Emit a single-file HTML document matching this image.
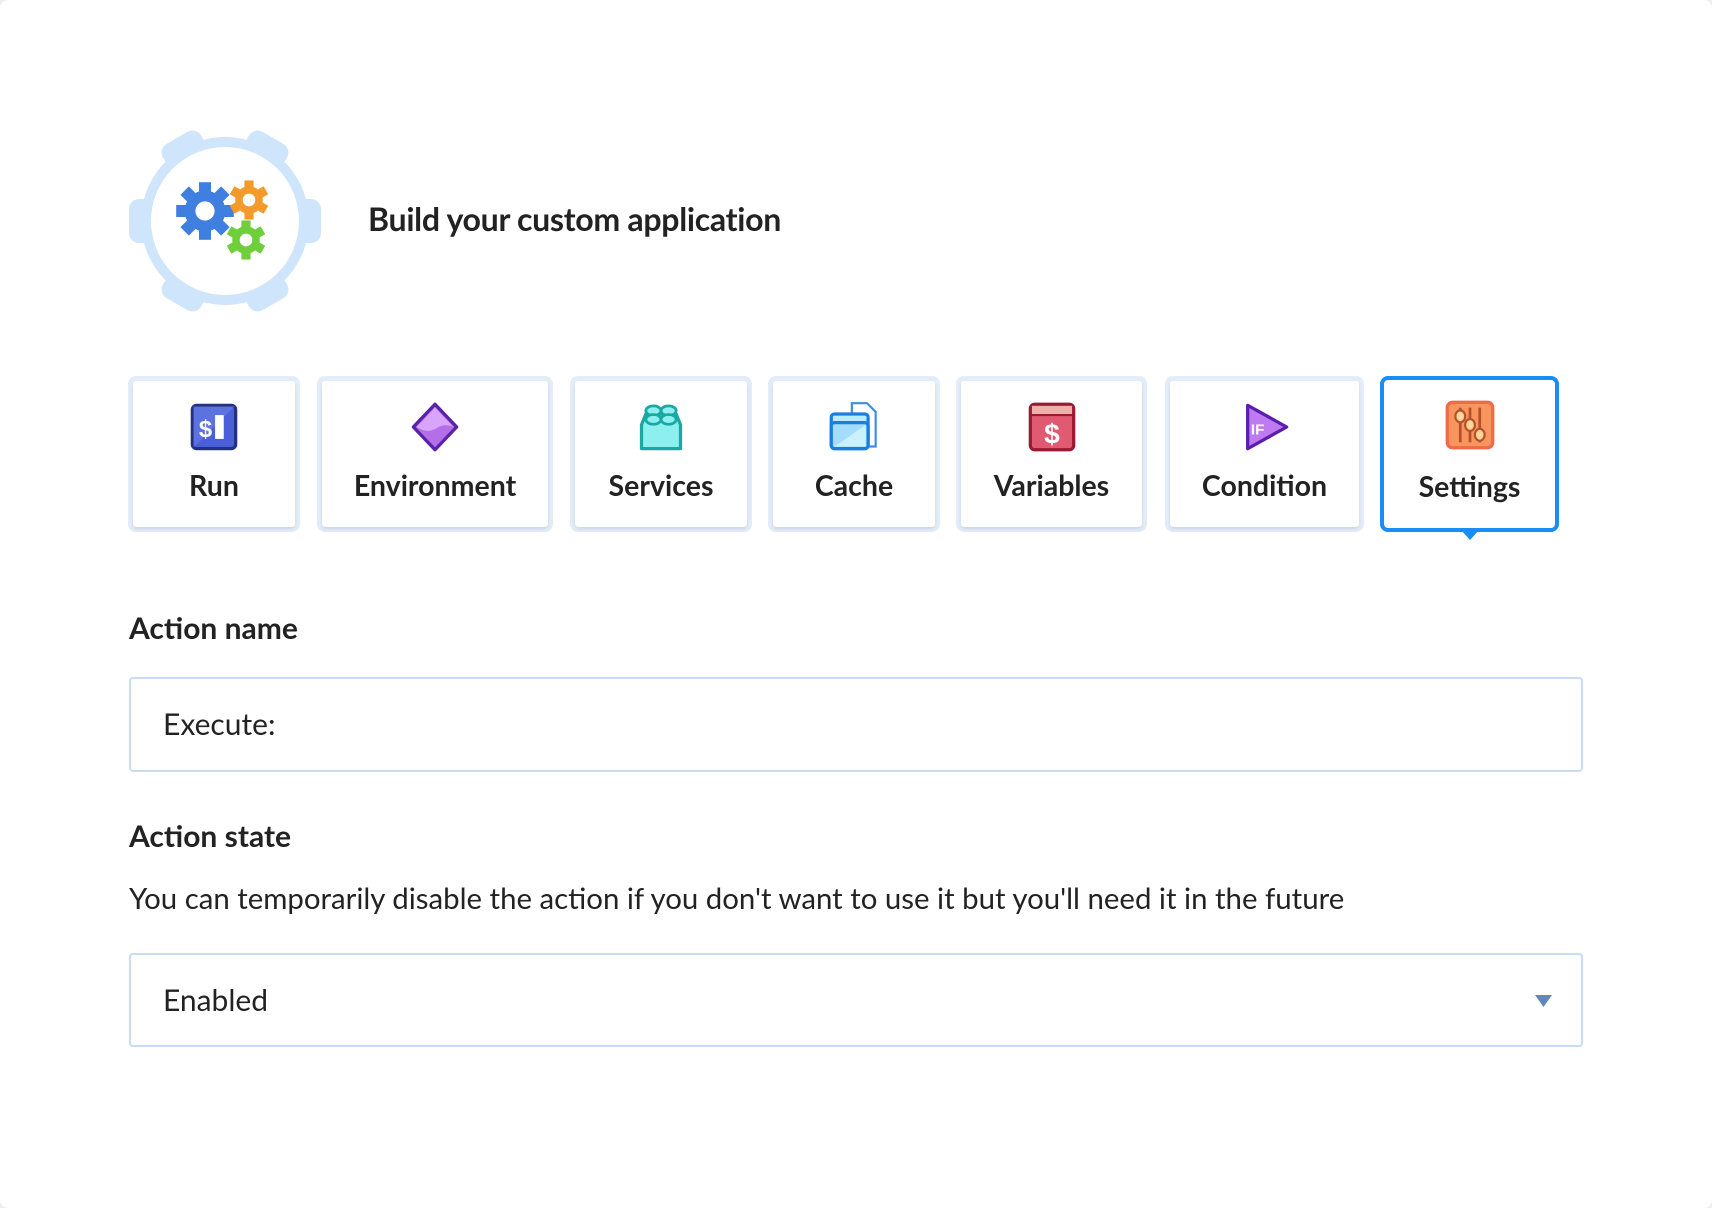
<!DOCTYPE html>
<html><head><meta charset="utf-8"><style>
html,body{margin:0;padding:0;background:#eeeeee;}
#c{position:relative;width:1712px;height:1208px;background:#fff;border-radius:8px;overflow:hidden;font-family:"Lato","Liberation Sans",sans-serif;color:#222;}
.a{position:absolute;}
.tab{position:absolute;top:376px;height:156px;box-sizing:border-box;border:5px solid #e3edf9;border-radius:8px;background:#fff;}
.tab .in{position:absolute;inset:0;border-radius:4px;box-shadow:0 2px 3px rgba(150,170,200,.35);}
.tab .ic{position:absolute;left:50%;top:20px;width:52px;height:52px;margin-left:-26px;}
.tab .lb{position:absolute;left:0;right:0;top:88px;text-align:center;font-weight:bold;font-size:28.5px;color:#222;}
.sel{border:4px solid #1a8cf5;border-radius:8px;}
.lab{font-weight:bold;font-size:30px;}
.inp{position:absolute;left:129px;width:1454px;box-sizing:border-box;border:2px solid #c7dcf5;border-radius:4px;font-size:30px;}
</style></head><body><div id="c">
<svg class="a" style="left:125px;top:125px" width="200" height="192" viewBox="-100 -96 200 192">
<g fill="#cfe5fb" transform="rotate(30)">
<circle r="84"/>
<g id="t"><rect x="-22" y="-96" width="44" height="30" rx="10"/></g>
<use href="#t" transform="rotate(60)"/><use href="#t" transform="rotate(120)"/><use href="#t" transform="rotate(180)"/><use href="#t" transform="rotate(240)"/><use href="#t" transform="rotate(300)"/>
</g>
<circle r="74" fill="#fff"/>
<g transform="translate(-20,-10) scale(1.2)" fill="#3f7fe0"><circle r="17"/><g id="g1"><rect x="-5" y="-24" width="10" height="12"/></g><use href="#g1" transform="rotate(45)"/><use href="#g1" transform="rotate(90)"/><use href="#g1" transform="rotate(135)"/><use href="#g1" transform="rotate(180)"/><use href="#g1" transform="rotate(225)"/><use href="#g1" transform="rotate(270)"/><use href="#g1" transform="rotate(315)"/><circle r="8" fill="#fff"/></g>
<g transform="translate(24,-21) scale(1.15)" fill="#f39a2a"><circle r="12"/><g id="g2"><rect x="-4" y="-17" width="8" height="9"/></g><use href="#g2" transform="rotate(60)"/><use href="#g2" transform="rotate(120)"/><use href="#g2" transform="rotate(180)"/><use href="#g2" transform="rotate(240)"/><use href="#g2" transform="rotate(300)"/><circle r="5.5" fill="#fff"/></g>
<g transform="translate(21,19) scale(1.15)" fill="#6fcf3a"><circle r="12"/><g id="g3"><rect x="-4" y="-17" width="8" height="9"/></g><use href="#g3" transform="rotate(60)"/><use href="#g3" transform="rotate(120)"/><use href="#g3" transform="rotate(180)"/><use href="#g3" transform="rotate(240)"/><use href="#g3" transform="rotate(300)"/><circle r="5.5" fill="#fff"/></g>
</svg>
<div class="a" style="left:368px;top:199px;font-weight:bold;font-size:32.1px;letter-spacing:-0.3px;">Build your custom application</div>

<div class="tab" style="left:128px;width:172px"><div class="in"></div>
<svg class="ic" viewBox="0 0 48 48"><rect x="4" y="4" width="40" height="40" rx="4" fill="#4a5fd8" stroke="#243080" stroke-width="3"/><path d="M5 5 L43 5 L5 43Z" fill="#6a7fe8" opacity=".6"/><text x="10" y="33" font-family="Liberation Sans" font-weight="bold" font-size="22" fill="#fff">$</text><rect x="25" y="13" width="8" height="22" fill="#fff"/></svg>
<div class="lb">Run</div></div>
<div class="tab" style="left:317px;width:236px"><div class="in"></div>
<svg class="ic" viewBox="0 0 48 48"><path d="M24 3 L44 24 L24 45 L4 24Z" fill="#b46ee8" stroke="#5a22a8" stroke-width="3" stroke-linejoin="round"/><path d="M7 24 L24 6 L41 24 Q32 20 24 26 Q16 30 7 24Z" fill="#d9a4fb"/></svg>
<div class="lb">Environment</div></div>
<div class="tab" style="left:570px;width:182px"><div class="in"></div>
<svg class="ic" viewBox="0 0 48 48"><path d="M6 22 L10 12 H38 L42 22 V44 H6Z" fill="#8df0ef" stroke="#1aa8a5" stroke-width="3" stroke-linejoin="round"/><ellipse cx="17" cy="9" rx="7" ry="4.5" fill="#8df0ef" stroke="#1aa8a5" stroke-width="2.5"/><ellipse cx="31" cy="9" rx="7" ry="4.5" fill="#8df0ef" stroke="#1aa8a5" stroke-width="2.5"/><ellipse cx="17" cy="17" rx="7" ry="4.5" fill="#8df0ef" stroke="#1aa8a5" stroke-width="2.5"/><ellipse cx="31" cy="17" rx="7" ry="4.5" fill="#8df0ef" stroke="#1aa8a5" stroke-width="2.5"/></svg>
<div class="lb">Services</div></div>
<div class="tab" style="left:768px;width:172px"><div class="in"></div>
<svg class="ic" viewBox="0 0 48 48"><path d="M22 2 H36 L44 10 V42 H22Z" fill="#fff" stroke="#3a8ee6" stroke-width="2"/><rect x="3" y="12" width="34" height="32" rx="3" fill="#b9ecfc" stroke="#1a7de0" stroke-width="3"/><rect x="3" y="20" width="34" height="24" rx="3" fill="#a3ddfb" stroke="#1a7de0" stroke-width="3"/><path d="M6 42 L35 22 V42Z" fill="#c9f2fd"/></svg>
<div class="lb">Cache</div></div>
<div class="tab" style="left:956px;width:191px"><div class="in"></div>
<svg class="ic" viewBox="0 0 48 48"><rect x="4" y="3" width="40" height="42" rx="4" fill="#e05a72" stroke="#9a1a36" stroke-width="3"/><rect x="5.5" y="4.5" width="37" height="8" fill="#f0b0a8"/><line x1="5" y1="13" x2="43" y2="13" stroke="#9a1a36" stroke-width="2"/><text x="24" y="39" text-anchor="middle" font-family="Liberation Sans" font-weight="bold" font-size="26" fill="#fff">$</text></svg>
<div class="lb">Variables</div></div>
<div class="tab" style="left:1165px;width:199px"><div class="in"></div>
<svg class="ic" viewBox="0 0 48 48"><path d="M8 4 L44 24 L8 44Z" fill="#c07af0" stroke="#5a1fb0" stroke-width="3" stroke-linejoin="round"/><text x="11" y="31" font-family="Liberation Sans" font-weight="bold" font-size="14" fill="#fff">IF</text></svg>
<div class="lb">Condition</div></div>
<div class="tab sel" style="left:1380px;width:179px"><div style="position:absolute;left:0;top:19px;width:100%">
<svg style="position:absolute;left:50%;top:0;margin-left:-26px" width="52" height="52" viewBox="0 0 48 48"><rect x="3" y="3" width="42" height="42" rx="5" fill="#f7955c" stroke="#ee6a4a" stroke-width="3"/><g stroke="#b5502e" stroke-width="2.5"><line x1="15" y1="8" x2="15" y2="40"/><line x1="24" y1="8" x2="24" y2="40"/><line x1="33" y1="8" x2="33" y2="40"/></g><g fill="#fcd59a" stroke="#b5502e" stroke-width="2"><ellipse cx="15" cy="16" rx="4.5" ry="5.5"/><ellipse cx="24" cy="24" rx="4.5" ry="5.5"/><ellipse cx="33" cy="33" rx="4.5" ry="5.5"/></g></svg></div>
<div class="lb" style="top:90px">Settings</div></div>
<svg class="a" style="left:1461px;top:530px" width="18" height="11"><path d="M0 0 H18 L9 10Z" fill="#1a8cf5"/></svg>

<div class="a lab" style="left:129px;top:610px">Action name</div>
<div class="inp" style="top:677px;height:95px"><div style="position:absolute;left:32px;top:27px">Execute:</div></div>
<div class="a lab" style="left:129px;top:818px">Action state</div>
<div class="a" style="left:129px;top:881px;font-size:29.4px;">You can temporarily disable the action if you don't want to use it but you'll need it in the future</div>
<div class="inp" style="top:953px;height:94px"><div style="position:absolute;left:32px;top:27px">Enabled</div>
<svg style="position:absolute;left:1404px;top:40px" width="17" height="13"><path d="M0 0 H17 L8.5 12Z" fill="#5e89bb"/></svg></div>
</div></body></html>
